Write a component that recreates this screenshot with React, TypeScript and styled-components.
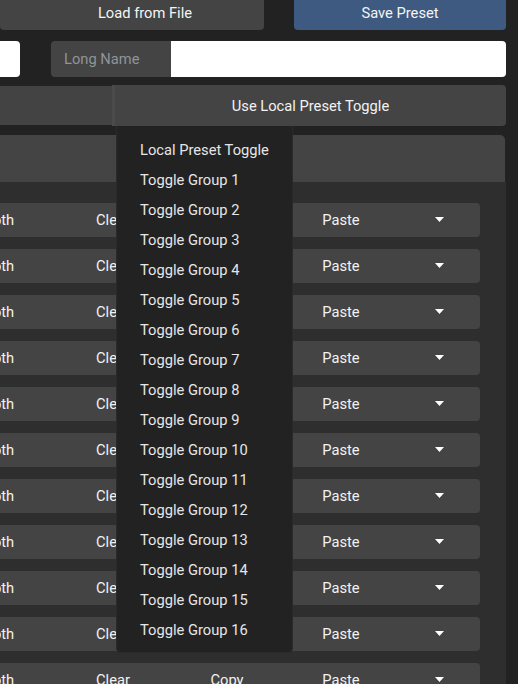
import React from "react";
import styled, { createGlobalStyle } from "styled-components";

const FS = "14.7px";

const Global = createGlobalStyle`
  html, body {
    margin: 0;
    padding: 0;
    background: #222222;
    overflow: hidden;
    height: 684px;
  }
  body {
    font-family: Roboto, "Noto Sans", "Liberation Sans", sans-serif;
    color: #f2f2f2;
  }
  * { box-sizing: border-box; }
`;

const Page = styled.div`
  width: 518px;
  display: flex;
  flex-direction: column;
  & > * { flex-shrink: 0; }
`;

const TopRow = styled.div`
  display: grid;
  grid-template-columns: 264px 212px;
  column-gap: 30px;
  margin-top: -10px;
`;

const TopButton = styled.div<{ $primary?: boolean; $padLeft?: number }>`
  height: 40px;
  padding-top: 6px;
  padding-left: ${(p) => p.$padLeft ?? 0}px;
  display: flex;
  align-items: center;
  justify-content: center;
  font-size: ${FS};
  color: #f4f4f4;
  background: ${(p) => (p.$primary ? "#3e5a80" : "#444444")};
  border-radius: 0 0 4px 4px;
`;

const NameRow = styled.div`
  display: flex;
  margin-top: 11px;
  height: 36px;
`;

const CutInput = styled.div`
  width: 20px;
  margin-right: 31px;
  background: #ffffff;
  border-radius: 0 4px 4px 0;
`;

const InputGroup = styled.div`
  display: flex;
  width: 455px;
`;

const InputLabel = styled.div`
  width: 120px;
  background: #444444;
  color: #8f9499;
  font-size: ${FS};
  display: flex;
  align-items: center;
  padding-left: 13px;
  border-radius: 4px 0 0 4px;
`;

const TextInput = styled.div`
  flex: 1;
  background: #ffffff;
  border-radius: 0 4px 4px 0;
`;

const ToggleRow = styled.div`
  display: flex;
  margin-top: 8px;
  height: 41px;
  width: 506px;
  position: relative;
  z-index: 2;
`;

const LeftTab = styled.div`
  width: 112px;
  height: 39px;
  margin-top: 1px;
  background: #434343;
`;

const ToggleWrap = styled.div`
  flex: 1;
  position: relative;
`;

const ToggleButton = styled.div`
  height: 41px;
  background: #444444;
  border-left: 3px solid #4b4b4b;
  border-radius: 0 4px 4px 0;
  display: flex;
  align-items: center;
  justify-content: center;
  font-size: ${FS};
  color: #f2f2f2;
`;

const Menu = styled.div`
  position: absolute;
  top: 100%;
  left: 4px;
  width: 177px;
  height: 527px;
  background: #222222;
  border: 1px solid #2a2a2a;
  border-top: none;
  border-radius: 0 0 5px 5px;
  padding: 9px 0 8px;
  display: flex;
  flex-direction: column;
`;

const MenuItem = styled.div`
  height: 30px;
  line-height: 30px;
  padding-left: 23px;
  font-size: ${FS};
  color: #e6e6e6;
  white-space: nowrap;
`;

const Card = styled.div`
  margin-top: 9px;
  width: 506px;
  display: flex;
  flex-direction: column;
`;

const CardHeader = styled.div`
  height: 47px;
  width: 505px;
  background: #444444;
  border-radius: 0 5px 0 0;
`;

const CardBody = styled.div`
  background: #2e2e2e;
  padding: 21px 0 12px;
  display: flex;
  flex-direction: column;
  gap: 12px;
`;

const PresetRow = styled.div`
  display: grid;
  grid-template-columns: repeat(4, 114px) 82px;
  width: 538px;
  height: 34px;
  flex-shrink: 0;
  margin-left: -58px;
  background: #444444;
  border-radius: 4px;
`;

const Cell = styled.div`
  display: flex;
  align-items: center;
  justify-content: center;
  font-size: ${FS};
  color: #f2f2f2;
`;

const Caret = () => (
  <svg width="9" height="5" viewBox="0 0 9 5" style={{ marginTop: -2 }}>
    <path d="M0 0 H9 L4.5 5 Z" fill="#ffffff" />
  </svg>
);

const menuItems = [
  "Local Preset Toggle",
  ...Array.from({ length: 16 }, (_, i) => `Toggle Group ${i + 1}`),
];

export default function App() {
  return (
    <>
      <Global />
      <Page>
        <TopRow>
          <TopButton $padLeft={26}>Load from File</TopButton>
          <TopButton $primary>Save Preset</TopButton>
        </TopRow>
        <NameRow>
          <CutInput />
          <InputGroup>
            <InputLabel>Long Name</InputLabel>
            <TextInput />
          </InputGroup>
        </NameRow>
        <ToggleRow>
          <LeftTab />
          <ToggleWrap>
            <ToggleButton>Use Local Preset Toggle</ToggleButton>
            <Menu>
              {menuItems.map((m) => (
                <MenuItem key={m}>{m}</MenuItem>
              ))}
            </Menu>
          </ToggleWrap>
        </ToggleRow>
        <Card>
          <CardHeader />
          <CardBody>
            {Array.from({ length: 11 }, (_, i) => (
              <PresetRow key={i}>
                <Cell>Both</Cell>
                <Cell>Clear</Cell>
                <Cell>Copy</Cell>
                <Cell>Paste</Cell>
                <Cell>
                  <Caret />
                </Cell>
              </PresetRow>
            ))}
          </CardBody>
        </Card>
      </Page>
    </>
  );
}
